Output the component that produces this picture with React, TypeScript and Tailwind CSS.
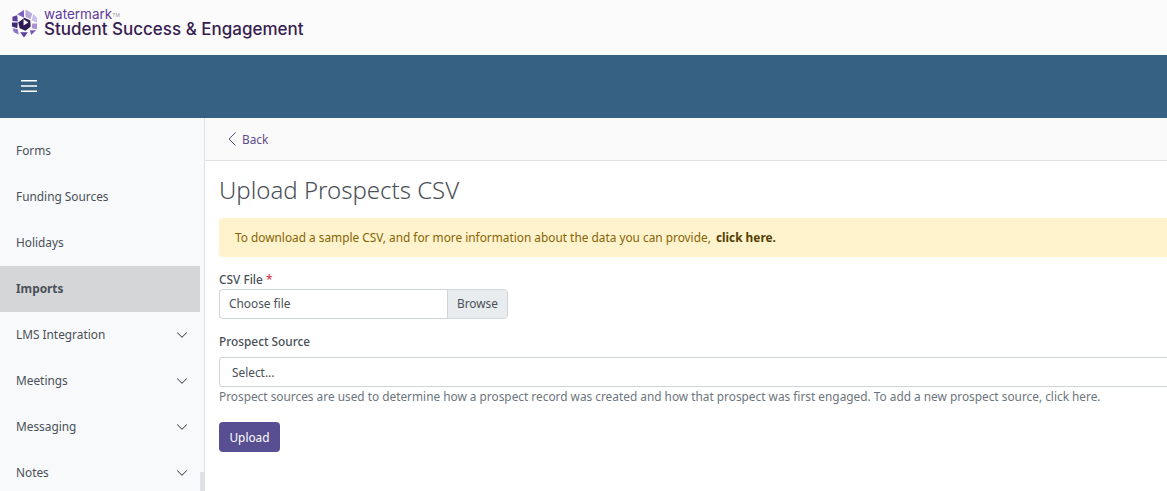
import React from 'react';
import { ChevronDown } from 'lucide-react';

const navItems = [
  { label: 'Forms' },
  { label: 'Funding Sources' },
  { label: 'Holidays' },
  { label: 'Imports', active: true },
  { label: 'LMS Integration', more: true },
  { label: 'Meetings', more: true },
  { label: 'Messaging', more: true },
  { label: 'Notes', more: true },
];

const Logo = () => (
  <svg viewBox="0 0 28 30" className="w-[27px] h-[29px]">
    <path d="M13.5 1 L6.5 5.5 L13.5 9 Z" fill="#7f5fbf" />
    <path d="M15 .5 L22 4.5 L20 10.5 L15 8 Z" fill="#b7a6dc" />
    <path d="M23 5 L27 9 L27 14 L21.5 12 Z" fill="#cbc0e6" />
    <path d="M1.5 8 L6.5 6.5 L7 13 L1.5 12.5 Z" fill="#5c3d99" />
    <path d="M1 14 L7 14 L6.5 20 L1 18 Z" fill="#3f2a78" />
    <path d="M27 15 L27 21 L21.5 20 L22 15 Z" fill="#a893d0" />
    <path d="M1.5 20 L7 21 L8 26.5 L3 24 Z" fill="#8f74c4" />
    <path d="M9.5 24 L17.5 24 L13.5 29.5 Z" fill="#5c3d99" />
    <path d="M19.5 22 L26 22 L21 27 Z" fill="#7b5bb5" />
    <path d="M14 9 L20 12 L20.5 18 L15 22.5 L9 20 L7.5 14 Z" fill="#2e1a52" />
    <path d="M13 10.5 L18 14 L13 17 Z" fill="#ffffff" />
  </svg>
);

export default function App() {
  return (
    <div className="h-[491px] w-[1167px] overflow-hidden flex flex-col bg-white font-['Noto_Sans',sans-serif] text-[11.85px] text-[#495057]">
      <header className="h-[55px] shrink-0 bg-[#fbfbfc] flex items-center pl-[11px] pb-[9px] gap-[6px]">
        <Logo />
        <div className="flex flex-col font-['Inter',sans-serif] leading-none">
          <span className="text-[13.5px] text-[#5f3a9e] h-[12px] leading-[12px]">watermark<sup className="text-[5px] text-[#999]">TM</sup></span>
          <span className="text-[17px] font-medium text-[#36204f] leading-[18px]">Student Success &amp; Engagement</span>
        </div>
      </header>
      <div className="h-[63px] shrink-0 bg-[#376182] flex items-center pl-[21px] pb-[2px]">
        <svg viewBox="0 0 16 12" className="w-[16px] h-[12px]" stroke="#fff" strokeWidth="1.5">
          <path d="M0 .75H16M0 6H16M0 11.25H16" />
        </svg>
      </div>
      <div className="flex flex-1 min-h-0">
        <nav className="w-[205px] shrink-0 bg-[#f8f9fb] border-r border-[#dee2e6] relative pt-[10px]">
          {navItems.map((item) => (
            <div
              key={item.label}
              className={`w-[200px] h-[46px] pl-[16px] pr-[9px] flex items-center justify-between ${item.active ? 'bg-[#d5d6d8] font-bold' : ''}`}
            >
              <span>{item.label}</span>
              {item.more && <ChevronDown className="w-[18px] h-[18px] text-[#495057]" strokeWidth={1.4} />}
            </div>
          ))}
          <div className="absolute right-0 bottom-0 w-[4px] h-[19px] bg-[#dfe1e4]" />
        </nav>
        <main className="flex-1 min-w-0 overflow-hidden">
          <div className="h-[43px] bg-[#fafafb] border-b border-[#dee2e6] flex items-center pl-[23px] gap-[6px] text-[#5f4b8b]">
            <svg viewBox="0 0 8 14" className="w-[8px] h-[14px]" fill="none" stroke="#5f4b8b" strokeWidth="1">
              <path d="M7.5 .5L1 7l6.5 6.5" />
            </svg>
            <span className="mt-[1px]">Back</span>
          </div>
          <div className="pl-[14px]">
            <h1 className="mt-[11px] text-[24px] leading-[36px] font-light text-[#495057]">Upload Prospects CSV</h1>
            <div className="mt-[10px] h-[39px] bg-[#fff3cd] rounded-l-[4px] flex items-center pl-[16px] text-[#856404] whitespace-nowrap">
              <span>
                To download a sample CSV, and for more information about the data you can provide,{' '}
                <b className="ml-[2px] text-[#533f03]">click here.</b>
              </span>
            </div>
            <div className="mt-[13px] font-medium leading-[18px]">
              CSV File <span className="text-[#dc3545]">*</span>
            </div>
            <div className="mt-[1px] w-[289px] h-[30px] flex border border-[#ced4da] rounded-[4px] overflow-hidden">
              <div className="flex-1 pl-[9px] flex items-center">Choose file</div>
              <div className="w-[60px] bg-[#e9ecef] border-l border-[#ced4da] flex items-center justify-center">Browse</div>
            </div>
            <div className="mt-[13px] font-medium leading-[18px]">Prospect Source</div>
            <div className="mt-[7px] h-[30px] border border-r-0 border-[#ced4da] rounded-l-[4px] pl-[12px] pt-[1px] flex items-center">Select...</div>
            <div className="text-[#6c757d] whitespace-nowrap leading-[18px]">
              Prospect sources are used to determine how a prospect record was created and how that prospect was first engaged. To add a new prospect source, click here.
            </div>
            <button className="mt-[17px] w-[61px] h-[30px] pt-[1px] bg-[#574f92] rounded-[4px] text-white">Upload</button>
          </div>
        </main>
      </div>
    </div>
  );
}
